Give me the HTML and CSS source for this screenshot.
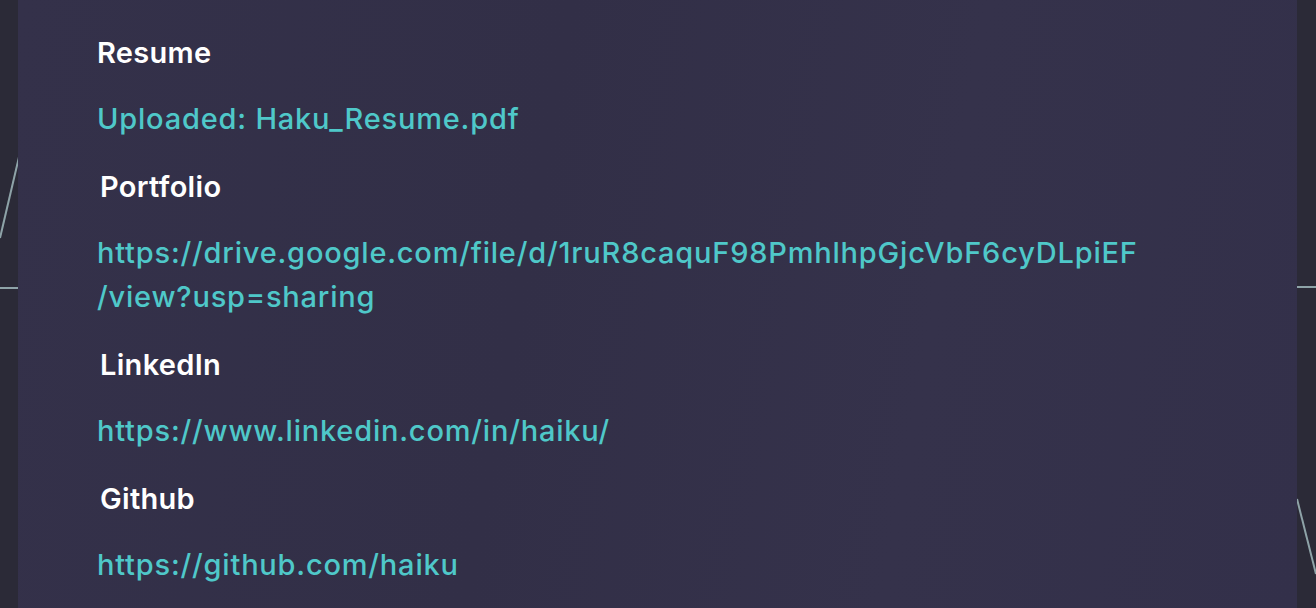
FILE: index.html
```html
<!DOCTYPE html>
<html lang="en">
<head>
<meta charset="utf-8">
<title>Profile links</title>
<link rel="stylesheet" href="styles.css">
</head>
<body>
<svg class="backdrop" width="1316" height="608" viewBox="0 0 1316 608" aria-hidden="true">
  <line x1="0" y1="238" x2="19" y2="157" />
  <line x1="0" y1="288" x2="19" y2="288" />
  <line x1="1297" y1="287" x2="1316" y2="287" />
  <line x1="1297" y1="499" x2="1316" y2="574" />
</svg>
<div class="page">
  <main class="panel">
    <section class="field">
      <h3 class="label">Resume</h3>
      <p class="value">Uploaded: Haku_Resume.pdf</p>
    </section>
    <section class="field">
      <h3 class="label label-indent">Portfolio</h3>
      <a class="value link" href="#">https://drive.google.com/file/d/1ruR8caquF98PmhlhpGjcVbF6cyDLpiEF<br>/view?usp=sharing</a>
    </section>
    <section class="field">
      <h3 class="label label-indent">LinkedIn</h3>
      <a class="value link" href="#">https://www.linkedin.com/in/haiku/</a>
    </section>
    <section class="field">
      <h3 class="label label-indent">Github</h3>
      <a class="value link" href="#">https://github.com/haiku</a>
    </section>
  </main>
</div>
</body>
</html>
```
FILE: styles.css
```css
* { box-sizing: border-box; }
html, body {
  margin: 0;
  padding: 0;
  width: 1316px;
  height: 608px;
  overflow: hidden;
  background: #2b2a37;
  font-family: "Inter", "Lato", sans-serif;
}
.backdrop {
  position: absolute;
  left: 0;
  top: 0;
  z-index: 0;
}
.backdrop line {
  stroke: #8ea3a8;
  stroke-width: 2;
}
.page {
  position: relative;
  z-index: 1;
  display: flex;
  height: 608px;
  padding: 0 19px 0 18px;
}
.panel {
  flex: 1;
  background: linear-gradient(100deg, #34314a 0%, #322f47 40%, #35324b 70%, #33304a 100%);
  padding: 31px 0 0 79px;
  display: flex;
  flex-direction: column;
  gap: 24px;
}
.field {
  display: flex;
  flex-direction: column;
  gap: 22px;
}
.label {
  margin: 0;
  font-size: 29px;
  line-height: 44px;
  font-weight: 600;
  letter-spacing: 0.3px;
  color: #ffffff;
}
.label-indent { padding-left: 3px; }
.value {
  margin: 0;
  font-size: 29px;
  line-height: 44px;
  font-weight: 500;
  letter-spacing: 0.8px;
  color: #4fc8c9;
  text-decoration: none;
}
.link { display: block; }
```
